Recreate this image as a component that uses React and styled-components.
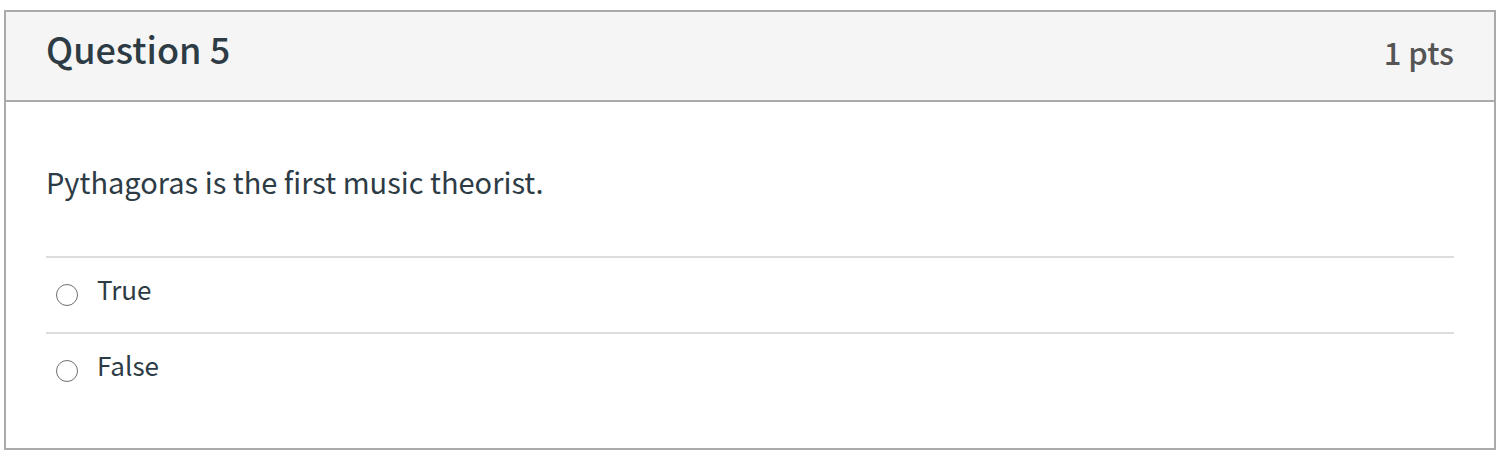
import React from 'react';
import styled, { createGlobalStyle } from 'styled-components';

const GlobalStyle = createGlobalStyle`
  html, body {
    margin: 0;
    padding: 0;
    background: #ffffff;
  }
  body {
    font-family: "Noto Sans CJK KR", "Noto Sans", sans-serif;
    color: #2d3b45;
  }
`;

const Page = styled.div`
  padding: 10px 10px 4px 4px;
`;

const QuestionCard = styled.div`
  border: 2px solid #aaaaaa;
  height: 440px;
  box-sizing: border-box;
  background: #fff;
`;

const Header = styled.div`
  display: flex;
  align-items: center;
  justify-content: space-between;
  height: 88px;
  padding: 0 40px 0 40px;
  background: #f5f5f5;
  border-bottom: 2px solid #aaaaaa;
`;

const Title = styled.h2`
  margin: 0 0 16px 0;
  font-size: 36px;
  line-height: 40px;
  font-weight: 500;
  color: #2d3b45;
`;

const Points = styled.span`
  font-size: 31px;
  line-height: 40px;
  font-weight: 500;
  color: #555555;
  margin-bottom: 8px;
`;

const Body = styled.div`
  padding: 59px 40px 0 40px;
`;

const Prompt = styled.p`
  margin: 0 0 55px 0;
  font-size: 29px;
  line-height: 40px;
  color: #2d3b45;
`;

const Answers = styled.div`
  display: flex;
  flex-direction: column;
`;

const Answer = styled.label`
  display: flex;
  align-items: center;
  gap: 19px;
  height: 76px;
  padding-left: 10px;
  border-top: 2px solid #dddddd;
  font-size: 26px;
  line-height: 32px;
  color: #2d3b45;
  cursor: pointer;
  box-sizing: border-box;
  padding-bottom: 12px;
`;

const Radio = styled.span`
  width: 22px;
  height: 22px;
  border: 1.5px solid #6f6f6f;
  border-radius: 50%;
  box-sizing: border-box;
  flex: none;
  margin-top: 12px;
`;

const answers = ['True', 'False'];

export default function App() {
  return (
    <Page>
      <GlobalStyle />
      <QuestionCard>
        <Header>
          <Title>Question 5</Title>
          <Points>1 pts</Points>
        </Header>
        <Body>
          <Prompt>Pythagoras is the first music theorist.</Prompt>
          <Answers>
            {answers.map(a => (
              <Answer key={a}>
                <Radio />
                {a}
              </Answer>
            ))}
          </Answers>
        </Body>
      </QuestionCard>
    </Page>
  );
}
